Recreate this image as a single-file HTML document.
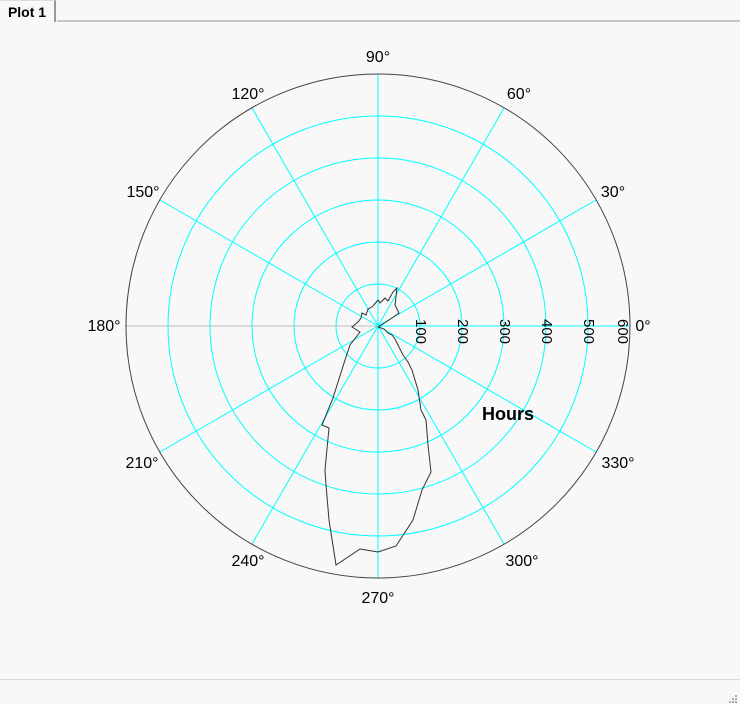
<!DOCTYPE html>
<html><head><style>
body{margin:0;width:740px;height:704px;background:#f8f8f8;position:relative;overflow:hidden;font-family:"Liberation Sans",sans-serif}
.tab{position:absolute;left:0;top:0;width:56px;height:22px;border-right:2px solid #999;border-top:1px solid #ddd;background:#f8f8f8;font-size:14px;font-weight:bold;line-height:22px;text-align:center;box-sizing:border-box}
.tl{position:absolute;left:57px;right:0;top:20px;border-top:2px solid #c8c8c8}
.bl{position:absolute;left:0;right:0;top:679px;border-top:1px solid #d8d8d8}
svg{position:absolute;left:0;top:0}
</style></head><body>
<div class="tab">Plot 1</div><div class="tl"></div><div class="bl"></div>
<svg width="740" height="704" font-family="Liberation Sans, sans-serif" font-size="16">
<g fill="none" stroke="#00ffff" stroke-width="1">
<circle cx="378" cy="326" r="42"/><circle cx="378" cy="326" r="84"/><circle cx="378" cy="326" r="126"/><circle cx="378" cy="326" r="168"/><circle cx="378" cy="326" r="210"/>
<line x1="378" y1="326" x2="630" y2="326"/>
<line x1="378" y1="326" x2="596" y2="200"/><line x1="378" y1="326" x2="504" y2="108"/><line x1="378" y1="74" x2="378" y2="578"/>
<line x1="378" y1="326" x2="252" y2="108"/><line x1="378" y1="326" x2="160" y2="200"/>
<line x1="378" y1="326" x2="160" y2="452"/><line x1="378" y1="326" x2="252" y2="544"/>
<line x1="378" y1="326" x2="504" y2="544"/><line x1="378" y1="326" x2="596" y2="452"/>
</g>
<line x1="126" y1="326" x2="378" y2="326" stroke="#bbb"/>
<circle cx="378" cy="326" r="252" fill="none" stroke="#444"/>
<polyline fill="none" stroke="#333" stroke-width="1" points="378,327 384,329 388,333 392,335 395,339 399,347 403,355 408,362 412,370 418,390 421,410 426,420 428,445 431,472 422,490 413,520 396,546 378,552 360,549 336,565 329,520 326,485 325,470 329,428 322,425 333,398 345,360 350,345 360,332 352,327 358,322 361,318 362,313 366,315 368,309 370,308 373,306 378,300 380,303 385,298 388,301 393,292 397,288 395,305 399,313 392,318 386,322 378,327"/>
<g text-anchor="middle" fill="#000">
<text x="378" y="62">90°</text><text x="519" y="99">60°</text><text x="613" y="197">30°</text><text x="643" y="331">0°</text>
<text x="248" y="99">120°</text><text x="143" y="197">150°</text><text x="104" y="331">180°</text>
<text x="142" y="468">210°</text><text x="248" y="566">240°</text><text x="378" y="603">270°</text>
<text x="522" y="566">300°</text><text x="618" y="468">330°</text>
</g>
<g font-size="15" fill="#000">
<text transform="translate(416,319) rotate(90)">100</text>
<text transform="translate(458,319) rotate(90)">200</text>
<text transform="translate(500,319) rotate(90)">300</text>
<text transform="translate(542,319) rotate(90)">400</text>
<text transform="translate(584,319) rotate(90)">500</text>
<text transform="translate(618,319) rotate(90)">600</text>
</g>
<text x="482" y="420" font-size="18" font-weight="bold">Hours</text>
<g fill="#aaa"><rect x="735" y="695" width="2" height="2"/><rect x="732" y="698" width="2" height="2"/><rect x="735" y="698" width="2" height="2"/><rect x="729" y="701" width="2" height="2"/><rect x="732" y="701" width="2" height="2"/><rect x="735" y="701" width="2" height="2"/></g>
</svg>
</body></html>
